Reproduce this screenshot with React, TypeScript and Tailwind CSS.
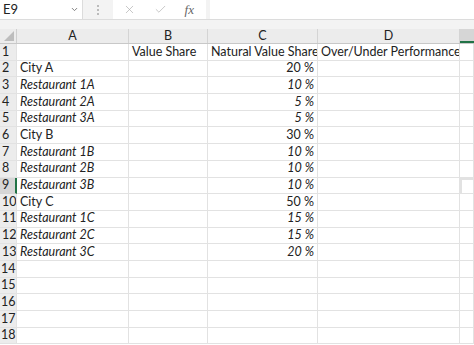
import { ChevronDown, X, Check } from 'lucide-react';

const rows: { a: string; c: string; italic: boolean }[] = [
  { a: 'City A', c: '20 %', italic: false },
  { a: 'Restaurant 1A', c: '10 %', italic: true },
  { a: 'Restaurant 2A', c: '5 %', italic: true },
  { a: 'Restaurant 3A', c: '5 %', italic: true },
  { a: 'City B', c: '30 %', italic: false },
  { a: 'Restaurant 1B', c: '10 %', italic: true },
  { a: 'Restaurant 2B', c: '10 %', italic: true },
  { a: 'Restaurant 3B', c: '10 %', italic: true },
  { a: 'City C', c: '50 %', italic: false },
  { a: 'Restaurant 1C', c: '15 %', italic: true },
  { a: 'Restaurant 2C', c: '15 %', italic: true },
  { a: 'Restaurant 3C', c: '20 %', italic: true },
];

const cols = 'grid grid-cols-[17px_112px_79px_110px_142px_1fr]';
const cell = 'border-r border-b border-[#e2e2e2] h-[16.7px] flex items-center overflow-hidden whitespace-nowrap';

export default function App() {
  return (
    <div className="w-[474px] h-[345px] overflow-hidden bg-white text-[#222] text-[12.5px] leading-none" style={{ fontFamily: 'Lato, "Liberation Sans", sans-serif' }}>
      {/* Formula bar */}
      <div className="flex h-[20px] bg-[#f3f3f3] border-b border-[#dcdcdc]">
        <div className="w-[83px] bg-white flex items-center justify-between pl-[3px] pr-[3px] border-r border-[#dcdcdc]">
          <span className="text-[13px]">E9</span>
          <ChevronDown size={9} strokeWidth={2.5} className="text-[#777]" />
        </div>
        <div className="w-[30px] flex items-center justify-center">
          <span className="flex flex-col gap-[2px]">
            <span className="w-[2px] h-[2px] bg-[#bbb]" />
            <span className="w-[2px] h-[2px] bg-[#bbb]" />
            <span className="w-[2px] h-[2px] bg-[#bbb]" />
          </span>
        </div>
        <div className="w-[93px] bg-white flex items-center justify-between px-[10px]">
          <X size={13} strokeWidth={1.2} className="text-[#aaa]" />
          <Check size={13} strokeWidth={1.2} className="text-[#aaa]" />
          <span className="italic text-[#666] text-[13px] pr-[2px]" style={{ fontFamily: '"Liberation Serif", serif' }}>fx</span>
        </div>
        <div className="w-[4px]" />
        <div className="flex-1 bg-white" />
      </div>
      <div className="h-[9px] bg-[#f3f3f3]" />

      {/* Column headers */}
      <div className={cols + ' h-[15px] bg-[#ececec] border-b border-[#c8c8c8]'}>
        <div className="border-r border-[#cfcfcf] relative">
          <div className="absolute right-[2px] bottom-[2px] w-0 h-0 border-l-[10px] border-l-transparent border-b-[10px] border-b-[#bdbdbd]" />
        </div>
        {['A', 'B', 'C', 'D'].map((h) => (
          <div key={h} className="border-r border-[#d4d4d4] flex items-center justify-center">{h}</div>
        ))}
        <div className="bg-[#d6d6d6] border-b-2 border-[#217346]" />
      </div>

      {/* Rows */}
      <div className={cols}>
        <div className={cell + ' bg-[#ececec] border-[#d4d4d4] pl-[2px]'}>1</div>
        <div className={cell} />
        <div className={cell + ' pl-[3px]'}>Value Share</div>
        <div className={cell + ' pl-[3px]'}>Natural Value Share</div>
        <div className={cell + ' pl-[3px]'}>Over/Under Performance</div>
        <div className={cell} />
        {rows.map((r, i) => {
          const n = i + 2;
          const sel = n === 9;
          return [
            <div
              key={'h' + n}
              className={cell + (sel ? ' bg-[#d6d6d6] border-r-2 border-r-[#217346] border-b-[#d4d4d4] pl-[2px]' : ' bg-[#ececec] border-[#d4d4d4] pl-[2px]')}
            >
              {n}
            </div>,
            <div key={'a' + n} className={cell + ' pl-[3px]' + (r.italic ? ' italic' : '')}>{r.a}</div>,
            <div key={'b' + n} className={cell} />,
            <div key={'c' + n} className={cell + ' justify-end pr-[3px]' + (r.italic ? ' italic' : '')}>{r.c}</div>,
            <div key={'d' + n} className={cell} />,
            <div key={'e' + n} className={cell + (sel ? ' border-2 border-[#217346]' : '')} />,
          ];
        })}
        {[14, 15, 16, 17, 18].map((n) => [
          <div key={'h' + n} className={cell + ' bg-[#ececec] border-[#d4d4d4] pl-[1px]'}>{n}</div>,
          <div key={'a' + n} className={cell} />,
          <div key={'b' + n} className={cell} />,
          <div key={'c' + n} className={cell} />,
          <div key={'d' + n} className={cell} />,
          <div key={'e' + n} className={cell} />,
        ])}
      </div>
    </div>
  );
}
